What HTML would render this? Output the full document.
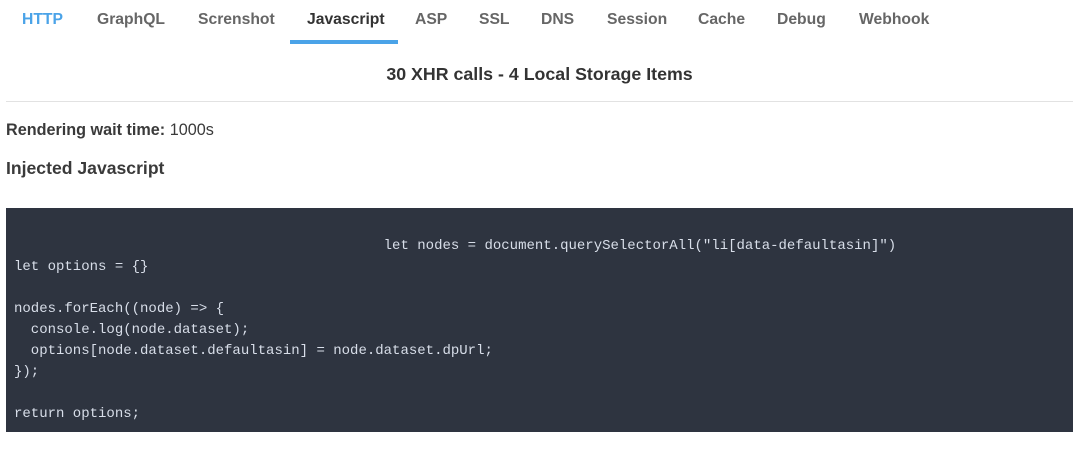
<!DOCTYPE html>
<html><head><style>
body{margin:0;width:1089px;height:450px;background:#fff;font-family:"Liberation Sans",sans-serif;color:#3a3a3a;position:relative;overflow:hidden}
.t{position:absolute;top:11px;font-size:15.7px;font-weight:bold;color:#666;white-space:nowrap}
.ul{position:absolute;left:290px;top:40px;width:108px;height:4px;background:#4aa3e8}
pre{position:absolute;left:6px;top:208px;width:1067px;height:224px;margin:0;background:#2e3440;color:#d8dee9;font-family:"Liberation Mono",monospace;font-size:14px;line-height:21px;padding:28px 0 0 8px;box-sizing:border-box;white-space:pre}
</style></head><body>
<span class="t" style="left:22px;color:#4aa3e8">HTTP</span>
<span class="t" style="left:97px">GraphQL</span>
<span class="t" style="left:198px">Screnshot</span>
<span class="t" style="left:307px;color:#333">Javascript</span>
<span class="t" style="left:415px">ASP</span>
<span class="t" style="left:479px">SSL</span>
<span class="t" style="left:541px">DNS</span>
<span class="t" style="left:607px">Session</span>
<span class="t" style="left:698px">Cache</span>
<span class="t" style="left:777px">Debug</span>
<span class="t" style="left:859px">Webhook</span>
<div class="ul"></div>
<div style="position:absolute;left:0;width:1079px;top:64px;text-align:center;font-weight:bold;font-size:17.8px;color:#333">30 XHR calls - 4 Local Storage Items</div>
<div style="position:absolute;left:6px;width:1067px;top:101px;height:1px;background:#e2e2e2"></div>
<div style="position:absolute;left:6px;top:121px;font-size:16.2px"><b>Rendering wait time:</b> 1000s</div>
<div style="position:absolute;left:6px;top:158px;font-size:17.6px;font-weight:bold">Injected Javascript</div>
<pre>                                            let nodes = document.querySelectorAll("li[data-defaultasin]")
let options = {}

nodes.forEach((node) =&gt; {
  console.log(node.dataset);
  options[node.dataset.defaultasin] = node.dataset.dpUrl;
});

return options;</pre>
</body></html>
